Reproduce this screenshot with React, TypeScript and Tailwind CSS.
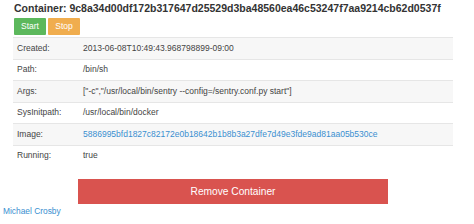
import React from "react";

const rows: { label: string; value: string; link?: boolean }[] = [
  { label: "Created:", value: "2013-06-08T10:49:43.968798899-09:00" },
  { label: "Path:", value: "/bin/sh" },
  { label: "Args:", value: '["-c","/usr/local/bin/sentry --config=/sentry.conf.py start"]' },
  { label: "SysInitpath:", value: "/usr/local/bin/docker" },
  { label: "Image:", value: "5886995bfd1827c82172e0b18642b1b8b3a27dfe7d49e3fde9ad81aa05b530ce", link: true },
  { label: "Running:", value: "true" },
];

export default function App() {
  return (
    <div
      className="w-[474px] h-[224px] bg-white overflow-hidden text-[#333]"
      style={{ fontFamily: '"Liberation Sans", Arial, sans-serif' }}
    >
      <div className="pl-[14px] pt-[1px] h-[18px] text-[10.5px] leading-[14px] font-bold text-[#333]">
        Container: 9c8a34d00df172b317647d25529d3ba48560ea46c53247f7aa9214cb62d0537f
      </div>
      <div className="flex pl-[14px] gap-[2px] h-[19px] items-start">
        <div className="w-[32px] h-[17px] bg-[#5cb85c] text-white text-[8.5px] flex items-center justify-center rounded-[1px]">
          Start
        </div>
        <div className="w-[32px] h-[17px] bg-[#f0ad4e] text-white text-[8.5px] flex items-center justify-center rounded-[1px]">
          Stop
        </div>
      </div>
      <div className="ml-[13px] w-[440px] flex flex-col">
        {rows.map((r, i) => (
          <div
            key={r.label}
            className={
              "flex items-center h-[21.5px] text-[8.5px] border-t border-[#e6e6e6] " +
              (i % 2 === 0 ? "bg-[#f7f7f7]" : "bg-white")
            }
          >
            <div className="w-[70px] pl-[4px] text-[#444]">{r.label}</div>
            <div className={r.link ? "text-[#3a8fd0]" : "text-[#444]"}>{r.value}</div>
          </div>
        ))}
      </div>
      <div className="pl-[78px] pt-[13px]">
        <div className="w-[310px] h-[25px] bg-[#d9534f] text-white text-[10.2px] flex items-center justify-center">
          Remove Container
        </div>
      </div>
      <div className="pl-[3px] pt-[1px] text-[8.4px] leading-[12px] text-[#3a8fd0]">Michael Crosby</div>
    </div>
  );
}
